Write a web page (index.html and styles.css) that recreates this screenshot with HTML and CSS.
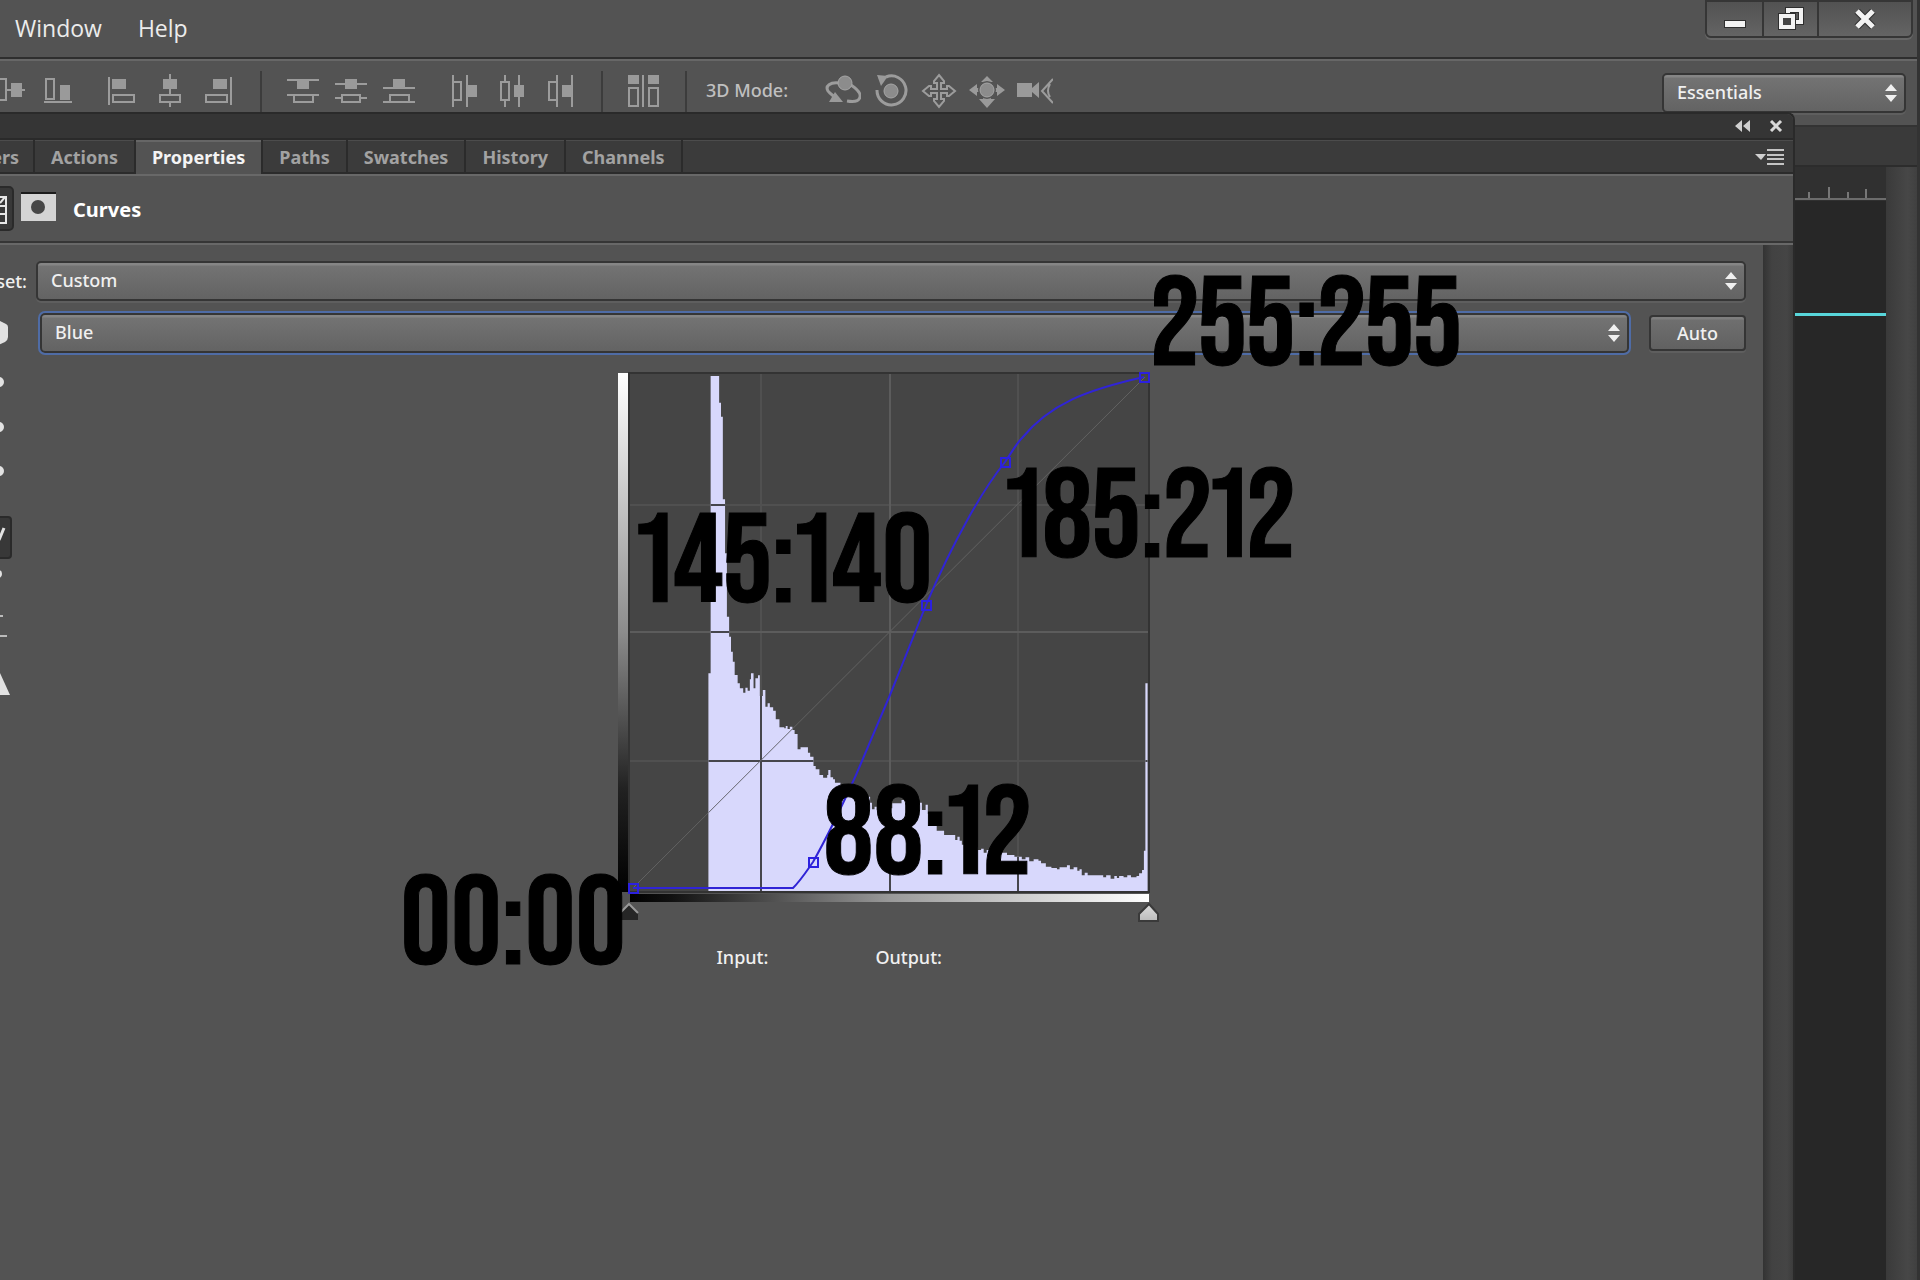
FILE: index.html
```html
<!DOCTYPE html>
<html lang="en">
<head>
<meta charset="utf-8">
<meta name="viewport" content="width=device-width, initial-scale=1">
<title>Curves – Properties</title>
<link rel="stylesheet" href="styles.css">
</head>
<body>
<div class="app">
  <header class="menubar">
    <nav class="menus">
      <a href="#window">Window</a>
      <a href="#help">Help</a>
    </nav>
    <div class="window-controls">
      <button type="button" class="wc wc-min" aria-label="Minimize"><svg width="22" height="22"><path d="M0 12h22v8H0z" fill="#2e2e2e"/><path d="M1 13h20v6H1z" fill="#f2f2f2"/></svg></button>
      <button type="button" class="wc wc-restore" aria-label="Restore"><svg width="26" height="24"><path d="M10 3h13v12H10z" fill="none" stroke="#2e2e2e" stroke-width="6"/><path d="M10 3h13v12H10z" fill="none" stroke="#f2f2f2" stroke-width="4"/><path d="M3 9h12v11H3z" fill="#555" stroke="#2e2e2e" stroke-width="6"/><path d="M3 9h12v11H3z" fill="#444" stroke="#f2f2f2" stroke-width="4"/></svg></button>
      <button type="button" class="wc wc-close" aria-label="Close"><svg width="24" height="20"><path d="M4 2l16 16M20 2L4 18" stroke="#2e2e2e" stroke-width="7"/><path d="M4 2l16 16M20 2L4 18" stroke="#f2f2f2" stroke-width="5"/></svg></button>
    </div>
  </header>

  <div class="options-bar">
    <div class="group group-first">
      <button type="button" class="tool" aria-label="Align vertical centers"><svg class="ico"><path class="o" d="M4 6h10v21H4z"/><path class="o" d="M14 17h19"/><path class="f" d="M19 10h11v14H19z"/></svg></button>
      <button type="button" class="tool" aria-label="Align bottom edges"><svg class="ico"><path class="o" d="M6 6h8v20H6zM4 29h28"/><path class="f" d="M20 12h10v15H20z"/></svg></button>
    </div>
    <div class="group">
      <button type="button" class="tool" aria-label="Align left edges"><svg class="ico"><path class="o" d="M4 4v28M8 22h21v7H8z"/><path class="f" d="M7 6h14v10H7z"/></svg></button>
      <button type="button" class="tool" aria-label="Align horizontal centers"><svg class="ico"><path class="o" d="M17 1v20M17 30v4M7 22h20v7H7z"/><path class="f" d="M10 6h14v10H10z"/></svg></button>
      <button type="button" class="tool" aria-label="Align right edges"><svg class="ico"><path class="o" d="M30 4v28M5 22h21v7H5z"/><path class="f" d="M12 6h14v10H12z"/></svg></button>
    </div>
    <span class="sep"></span>
    <div class="group">
      <button type="button" class="tool" aria-label="Distribute top edges"><svg class="ico"><path class="o" d="M2 7h32M2 22h32M9 22v7h19v-7"/><path class="f" d="M12 7h12v9H12z"/></svg></button>
      <button type="button" class="tool" aria-label="Distribute vertical centers"><svg class="ico"><path class="o" d="M2 11h32M2 25h6M28 25h6M9 22h18v7H9z"/><path class="f" d="M12 6h12v10H12z"/></svg></button>
      <button type="button" class="tool" aria-label="Distribute bottom edges"><svg class="ico"><path class="o" d="M2 15h32M2 29h32M9 29v-7h19v7"/><path class="f" d="M12 6h12v9H12z"/></svg></button>
    </div>
    <div class="group">
      <button type="button" class="tool" aria-label="Distribute left edges"><svg class="ico"><path class="o" d="M7 2v32M7 9h8v18H7M21 2v32"/><path class="f" d="M21 12h10v12H21z"/></svg></button>
      <button type="button" class="tool" aria-label="Distribute horizontal centers"><svg class="ico"><path class="o" d="M11 2v7M11 28v6M7 9h8v18H7zM25 2v32"/><path class="f" d="M20 12h10v12H20z"/></svg></button>
      <button type="button" class="tool" aria-label="Distribute right edges"><svg class="ico"><path class="o" d="M15 2v32M15 9H7v18h8M30 2v32"/><path class="f" d="M20 12h10v12H20z"/></svg></button>
    </div>
    <span class="sep"></span>
    <div class="group">
      <button type="button" class="tool" aria-label="Auto-align layers"><svg class="ico"><path class="f" d="M2 2h11v9H2zM22 2h11v9H22z"/><path class="o" d="M3 15h9v18H3zM23 15h9v18h-9zM17 2v32"/></svg></button>
    </div>
    <span class="sep"></span>
    <span class="mode-label">3D Mode:</span>
    <div class="group group-3d">
      <button type="button" class="tool" aria-label="Orbit"><svg class="ico"><path class="o w" d="M14 10C5 9 0 13 3 18c2 3 5 4 9 8M26 12c6 4 10 8 9 12-1 5-7 5-13 4"/><path class="f" d="M10 19l8 10H4z"/><circle class="ball" cx="20" cy="10" r="7"/></svg></button>
      <button type="button" class="tool" aria-label="Roll"><svg class="ico"><path class="o w" d="M13 4a14.500 14.500 0 1 1-9 13"/><path class="f" d="M4 2l11 1-7 10z"/><circle class="ball" cx="18" cy="18" r="7"/></svg></button>
      <button type="button" class="tool" aria-label="Pan"><svg class="ico"><path class="o" d="M18 2l5 6v2h-3v6h6v-3h2l6 5-6 5h-2v-3h-6v6h3v2l-5 6-5-6v-2h3v-6h-6v3H8l-6-5 6-5h2v3h6v-6h-3V8z"/></svg></button>
      <button type="button" class="tool" aria-label="Slide"><svg class="ico"><path class="f" d="M18 3l6 6h-4v4h-4V9h-4zM18 35l8-9h-4v-3h-8v3h-4zM0 17l8-6v4h20v-4l8 6-8 6v-4H8v4z"/><circle cx="18" cy="17" r="9" fill="#555"/><circle class="ball" cx="18" cy="17" r="7"/></svg></button>
      <button type="button" class="tool" aria-label="Zoom camera"><svg class="ico"><path class="f" d="M0 10h15v5l7-6v16l-7-6v5H0z"/><path class="o" d="M36 6L25 18l11 12M33 11q-4 7 0 13"/></svg></button>
    </div>
    <span class="select workspace-select">
      <select aria-label="Workspace"><option>Essentials</option></select>
      <svg class="arrows" width="12" height="18"><path d="M6 0l6 7H0zM0 11h12l-6 7z"/></svg>
    </span>
  </div>

  <main class="workspace">
    <div class="doc-tabs"></div>
    <div class="document">
      <div class="canvas">
        <svg class="ruler" width="92" height="34"><path d="M15 25v6M35 20v11M54 25v6M72 22v9" stroke="#777" stroke-width="2"/><path d="M0 32h92" stroke="#6c6c6c" stroke-width="2"/></svg>
        <div class="guide"></div>
      </div>
      <div class="doc-scroll"></div>
    </div>
  </main>

  <section class="panel">
    <div class="panel-title">
      <button type="button" class="mini" aria-label="Collapse"><svg width="16" height="12"><path d="M7 0v12L0 6zM15 0v12L8 6z" fill="#d0d0d0"/></svg></button>
      <button type="button" class="mini" aria-label="Close panel"><svg width="14" height="12"><path d="M2 1l10 10M12 1L2 11" stroke="#d8d8d8" stroke-width="3"/></svg></button>
    </div>
    <div class="tabs">
      <button type="button" class="tab tab-cut">Layers</button>
      <button type="button" class="tab">Actions</button>
      <button type="button" class="tab active">Properties</button>
      <button type="button" class="tab">Paths</button>
      <button type="button" class="tab">Swatches</button>
      <button type="button" class="tab">History</button>
      <button type="button" class="tab">Channels</button>
      <button type="button" class="mini panel-menu" aria-label="Panel menu"><svg width="30" height="18"><path d="M0 6h11l-5 6z" fill="#d0d0d0"/><path d="M12 2h17M12 7h17M12 11h17M12 16h17" stroke="#c4c4c4" stroke-width="2"/></svg></button>
    </div>
    <div class="heading">
      <svg width="58" height="46"><rect x="-20" y="1" width="33" height="43" rx="4" fill="#383838" stroke="#2a2a2a" stroke-width="2"/><path d="M-4 11H6v26H-4M-4 20H6M-4 28H6M0 17l5-6" fill="none" stroke="#e6e6e6" stroke-width="2"/><path d="M21 6h35v3H21z" fill="#1c1c1c"/><path d="M21 8h35v27H21z" fill="#d4d4d4"/><circle cx="38" cy="21" r="7" fill="#474747"/></svg>
      <h1>Curves</h1>
    </div>
    <div class="panel-body">
      <div class="settings">
        <div class="row preset-row">
          <label class="cut" for="preset">Preset:</label>
          <span class="select"><select id="preset"><option>Custom</option></select>
          <svg class="arrows" width="12" height="18"><path d="M6 0l6 7H0zM0 11h12l-6 7z"/></svg></span>
        </div>
        <div class="row channel-row">
          <svg class="hand" width="8" height="28"><path d="M-2 1l8 4q2 1 2 3v10q0 3-3 5l-7 3z" fill="#e2e2e2"/></svg>
          <span class="select focused"><select aria-label="Channel"><option>Blue</option></select>
          <svg class="arrows" width="12" height="18"><path d="M6 0l6 7H0zM0 11h12l-6 7z"/></svg></span>
          <button type="button" class="auto">Auto</button>
        </div>
        <div class="editor">
          <svg class="rail" width="14" height="344"><g fill="#e2e2e2"><circle cx="-1" cy="22" r="5"/><circle cx="-1" cy="67" r="5"/><circle cx="-1" cy="111" r="5"/><circle cx="-2" cy="214" r="4"/><path d="M0 313l10 22H0z"/></g><rect x="-20" y="157" width="31" height="41" rx="3" fill="#383838" stroke="#2a2a2a" stroke-width="2"/><path d="M4 168l-5 12" stroke="#e2e2e2" stroke-width="3"/><path d="M0 256h3M0 276h7" stroke="#bbb" stroke-width="2"/></svg>
          <div class="stage">
            <svg class="graph" viewBox="614 360 550 570" width="550" height="570">
              <defs>
                <linearGradient id="tone-y" x2="0" y2="1"><stop stop-color="#fff"/><stop offset=".5" stop-color="#8c8c8c"/><stop offset=".8" stop-color="#222"/><stop offset="1"/></linearGradient>
                <linearGradient id="tone-x"><stop/><stop offset=".08" stop-color="#111"/><stop offset=".5" stop-color="#999"/><stop offset="1" stop-color="#fff"/></linearGradient>
                <linearGradient id="knob" x2="0" y2="1"><stop stop-color="#ddd"/><stop offset="1" stop-color="#bbb"/></linearGradient>
                <clipPath id="hist"><path transform="translate(600 640) scale(.37 .3333)" d="M293 755V100H299V-792H322V-712H327V-670H332V-422H338V-260H343V-70H349V-10H354V35H359V65H364V105H372V130H378V145H387V158H393V143H399V152H405V118H408V100H415V145H420V115H427V106H432V168H440V150H447V200H453V190H459V202H468V212H475V238H485V262H498V265H502V258H507V267H513V260H520V270H526V282H534V328H542V322H557V322H562V338H568V350H577V378H583V388H593V405H603V413H614V405H617V390H623V412H630V418H635V428H650V435H660V445H700V470H730V488H735V508H742V500H748V510H755V505H790V490H815V480H840V488H870V510H880V494H886V522H893V552H910V572H930V585H960V600H966V590H972V602H978V614H1000V622H1020V630H1030V626H1037V638H1045V630H1055V622H1065V638H1100V645H1120V650H1140V658H1150V652H1160V664H1172V658H1185V662H1192V670H1205V680H1220V684H1235V688H1242V682H1262V676H1270V688H1280V682H1290V692H1296V688H1302V706H1310V698H1318V706H1360V712H1368V706H1380V716H1390V708H1397V714H1403V708H1415V712H1425V706H1435V712H1450V708H1457V700H1465V690H1470V632H1474V130H1480V755z"/></clipPath>
              </defs>
              <rect x="618" y="373" width="10" height="519" fill="url(#tone-y)"/>
              <rect x="629" y="373" width="520" height="519" fill="#454545"/>
              <path class="grid-line dim" d="M761 373V892M1018 373V892M629 505H1149M629 761H1149"/>
              <path class="grid-line" d="M890 373V892M629 632H1149"/>
              <path class="diag" d="M633 888L1145 377"/>
              <g clip-path="url(#hist)">
                <rect x="700" y="373" width="450" height="519" fill="#d8d8fc"/>
                <path class="grid-line dark" d="M761 373V892M1018 373V892M890 373V892M629 505H1149M629 632H1149M629 761H1149"/>
                <path class="diag dark-diag" d="M633 888L1145 377"/>
              </g>
              <rect x="629" y="373" width="520" height="519" fill="none" stroke="#333" stroke-width="2"/>
              <rect x="630" y="894" width="519" height="8" fill="url(#tone-x)"/>
              <path class="curve" d="M633 888H793C801 880 806 872 813 862C830 832 842 806 856 775C868 747 880 718 890 695C903 663 914 635 926 605C940 572 955 542 969 517C983 492 993 477 1005 462C1012 452 1016 444 1022 438C1050 404 1086 390 1144 377"/>
              <g class="points"><rect x="629" y="884" width="9" height="9"/><rect x="809" y="858" width="9" height="9"/><rect x="922" y="601" width="9" height="9"/><rect x="1001" y="458" width="9" height="9"/><rect x="1140" y="373" width="9" height="9"/></g>
              <path d="M629 904l9 9v7h-18v-7z" fill="#262626"/><path d="M620 913l9-9 9 9" fill="none" stroke="#999" stroke-width="2"/>
              <path d="M1149 904l9 10v7h-19v-7z" fill="url(#knob)" stroke="#3a3a3a" stroke-width="2"/>
            </svg>
            <div class="readout"><span>Input:</span><span>Output:</span></div>
            <span class="note note-a">00:00</span>
            <span class="note note-b">88:12</span>
            <span class="note note-c">145:140</span>
            <span class="note note-d">185:212</span>
            <span class="note note-e">255:255</span>
          </div>
        </div>
      </div>
      <div class="panel-scroll"></div>
    </div>
  </section>
</div>
</body>
</html>
```
FILE: styles.css
```css
* { box-sizing: border-box; }
body {
  margin: 0;
  background: #535353;
  color: #f0f0f0;
  font: 500 18px/24px "Noto Sans", "Open Sans", sans-serif;
}
button, select { font: inherit; color: inherit; margin: 0; }
button { padding: 0; border: 0; background: none; }
svg { display: block; }

.app {
  position: relative;
  display: flex;
  flex-direction: column;
  height: 100vh;
  min-height: 1000px;
  overflow: hidden;
  border-right: 3px solid #333;
}

/* menu bar */
.menubar {
  display: flex;
  justify-content: space-between;
  align-items: flex-start;
  height: 59px;
  padding-right: 4px;
  border-bottom: 2px solid #2e2e2e;
}
.menus { display: flex; gap: 36px; padding: 12px 0 0 15px; }
.menus a {
  color: #ececec;
  text-decoration: none;
  font: 400 23px/32px "Open Sans", "Noto Sans", sans-serif;
}
.window-controls {
  display: flex;
  height: 38px;
  border: 2px solid #363636;
  border-radius: 0 0 6px 6px;
  background: linear-gradient(#525252, #646464);
  box-shadow: 0 2px 0 #666;
}
.wc { display: grid; place-items: center; width: 55px; }
.wc + .wc { border-left: 2px solid #363636; }
.wc-close { width: 94px; }

/* options bar */
.options-bar {
  display: flex;
  align-items: flex-start;
  gap: 17px;
  height: 68px;
  padding: 10px 11px 0 0;
  border-top: 2px solid #676767;
  border-bottom: 2px solid #333;
}
.group { display: flex; padding-top: 2px; }
.group-first { margin-left: -14px; }
.group-3d { margin-left: 8px; }
.tool { display: grid; place-items: center; width: 48px; height: 36px; }
.ico { width: 36px; height: 36px; }
.o { fill: none; stroke: #9c9c9c; stroke-width: 2; }
.w { stroke-width: 3; }
.f { fill: #9a9a9a; }
.ball { fill: #8c8c8c; stroke: #a6a6a6; stroke-width: 1; }
.sep { width: 2px; height: 46px; background: #3c3c3c; }
.mode-label { min-width: 90px; padding: 7px 0 0 2px; color: #c0c0c0; }

.select { display: grid; align-items: center; flex: 1; }
.select > * { grid-area: 1 / 1; }
.select select {
  appearance: none;
  width: 100%;
  height: 40px;
  padding: 0 40px 2px 13px;
  border: 2px solid #353535;
  border-radius: 5px;
  background: linear-gradient(#858585 0 2px, #737373 3px, #636363);
  box-shadow: 0 2px 0 #5e5e5e;
}
.arrows { justify-self: end; margin-right: 9px; fill: #f0f0f0; pointer-events: none; }
.workspace-select { flex: 0 0 244px; margin: 2px 0 0 auto; }

/* document behind the panel */
.workspace { flex: 1; display: flex; flex-direction: column; }
.doc-tabs { height: 40px; background: #3a3a3a; border-bottom: 2px solid #2c2c2c; }
.document { flex: 1; display: flex; }
.canvas { flex: 1; background: #272727; }
.ruler { margin-left: auto; background: #303030; }
.guide { height: 3px; margin-top: 112px; background: #58d6da; }
.doc-scroll { width: 31px; background: linear-gradient(90deg, #3a3a3a, #474747 70%, #404040); }

/* floating panel */
.panel {
  position: absolute;
  inset: 112px 122px 0 0;
  display: flex;
  flex-direction: column;
  background: #535353;
  border-top: 2px solid #2a2a2a;
  border-right: 2px solid #2a2a2a;
  border-top-right-radius: 8px;
  overflow: hidden;
}
.panel-title {
  display: flex;
  justify-content: flex-end;
  align-items: center;
  gap: 18px;
  height: 26px;
  padding-right: 10px;
  background: #353535;
  border-bottom: 2px solid #2a2a2a;
}
.tabs {
  display: flex;
  height: 34px;
  background: #3b3b3b;
  box-shadow: inset 0 1px 0 #4c4c4c, inset 0 -2px 0 #2b2b2b;
}
.tab {
  padding: 0 16px 1px;
  border-right: 2px solid #2b2b2b;
  color: #a2a2a2;
  font: 700 18px/30px "Noto Sans", "Open Sans", sans-serif;
}
.tab-cut { display: flex; justify-content: flex-end; align-items: center; width: 35px; padding: 0 14px 1px 0; }
.tab.active { background: #535353; color: #f4f4f4; box-shadow: inset 0 2px 0 #666; }
.panel-menu { margin: 8px 8px 0 auto; align-self: flex-start; }
.heading {
  display: flex;
  align-items: flex-start;
  gap: 15px;
  height: 69px;
  padding-top: 10px;
  border-top: 2px solid #686868;
  border-bottom: 2px solid #363636;
}
.heading h1 { margin: 12px 0 0; font-size: 20px; line-height: 24px; font-weight: 700; color: #fff; }
.panel-body { flex: 1; display: flex; border-top: 2px solid #686868; min-height: 0; }
.panel-scroll { width: 30px; background: linear-gradient(90deg, #333, #424242 30%, #454545 80%, #3c3c3c); }
.settings { flex: 1; min-width: 0; padding-top: 16px; }
.row { display: flex; align-items: center; padding-right: 17px; }
.preset-row { gap: 9px; }
.cut { display: flex; justify-content: flex-end; width: 27px; overflow: hidden; }
.channel-row { margin-top: 12px; }
.hand { margin-right: 32px; }
.focused select { outline: 2px solid #4f6ca6; box-shadow: none; }
.auto {
  width: 97px;
  height: 36px;
  margin-left: 20px;
  border: 2px solid #353535;
  border-radius: 4px;
  background: linear-gradient(#7e7e7e 0 2px, #6f6f6f 3px, #616161);
  box-shadow: 0 2px 0 #5e5e5e;
}
.editor { display: flex; margin-top: 7px; }
.stage { position: relative; flex: 0 0 550px; margin: 0 auto; }
.readout { display: flex; gap: 107px; margin-top: 15px; padding-left: 103px; }

/* curve graph */
.grid-line { fill: none; stroke: #5c5c5c; stroke-width: 2; }
.dim { stroke: #505050; }
.dark { stroke: #46464c; }
.diag { fill: none; stroke: #626262; stroke-width: 1; }
.dark-diag { stroke: #66666e; }
.curve { fill: none; stroke: #3024d6; stroke-width: 2; }
.points rect { fill: none; stroke: #2c20e0; stroke-width: 2; }

/* coordinates pinned over the graph */
.note {
  position: absolute;
  color: #000;
  font: 400 126px/102px "Bebas Neue", "Roboto Condensed", "Liberation Sans Narrow", "Liberation Sans", sans-serif;
  font-variant-numeric: proportional-nums;
  -webkit-text-stroke: 1px #000;
  white-space: nowrap;
}
.note-a { left: -213px; top: 516px; }
.note-b { left: 210px; top: 426px; }
.note-c { left: 23px; top: 154px; }
.note-d { left: 392px; top: 109px; }
.note-e { left: 538px; top: -83px; }
```
